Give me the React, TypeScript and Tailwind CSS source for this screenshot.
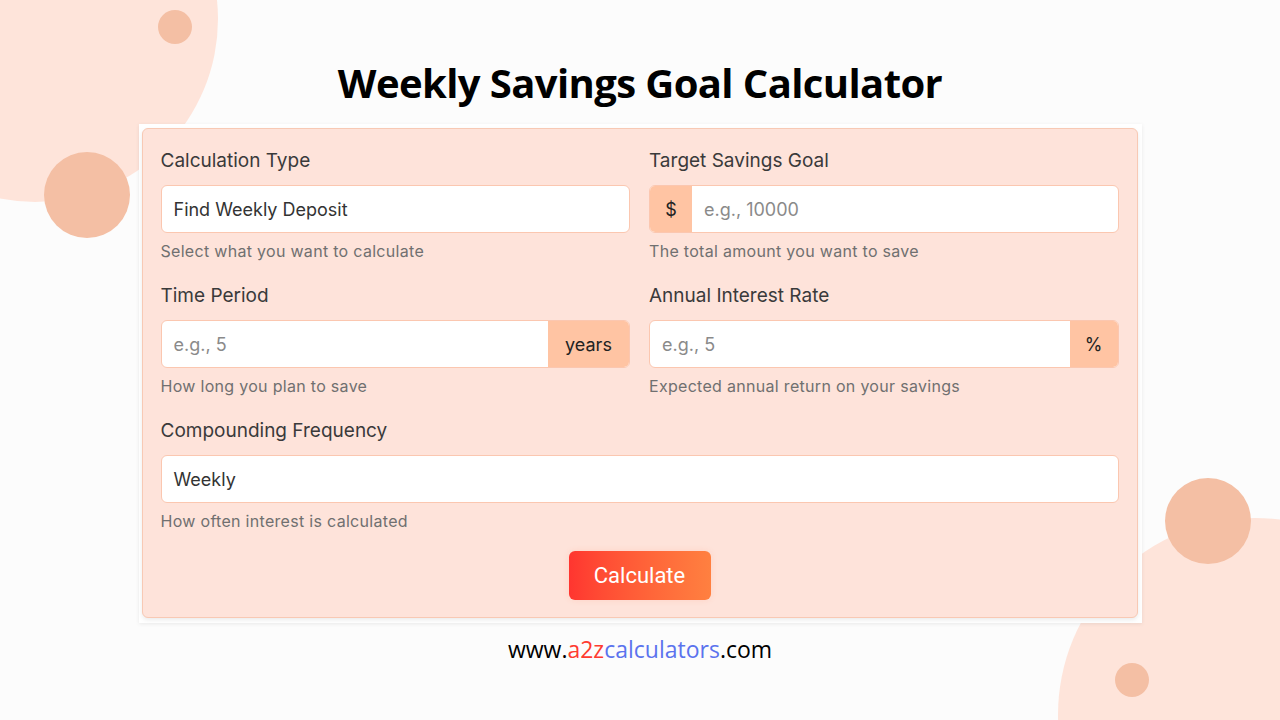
import React from "react";

const font = { fontFamily: "Inter, 'Noto Sans', sans-serif" } as const;

function Label({ children }: { children: React.ReactNode }) {
  return <div className="h-[24px] leading-[24px] text-[19px] text-[#3a3a3a]">{children}</div>;
}

function Helper({ children }: { children: React.ReactNode }) {
  return <div className="mt-[8px] h-[20px] leading-[20px] text-[16px] tracking-[0.3px] text-[#707070]">{children}</div>;
}

export default function App() {
  return (
    <div
      className="relative w-[1280px] h-[720px] overflow-hidden bg-[#fcfcfc] flex flex-col items-center"
      style={font}
    >
      {/* decorative circles */}
      <div className="absolute left-[-148px] top-[-164px] w-[366px] h-[366px] rounded-full bg-[#fee4da]" />
      <div className="absolute left-[158px] top-[10px] w-[34px] h-[34px] rounded-full bg-[#f4bfa4]" />
      <div className="absolute left-[44px] top-[152px] w-[86px] h-[86px] rounded-full bg-[#f4bfa4]" />
      <div className="absolute left-[1058px] top-[518px] w-[394px] h-[394px] rounded-full bg-[#fee4da]" />
      <div className="absolute left-[1165px] top-[478px] w-[86px] h-[86px] rounded-full bg-[#f4bfa4]" />
      <div className="absolute left-[1115px] top-[663px] w-[34px] h-[34px] rounded-full bg-[#f4bfa4]" />

      <h1
        className="relative mt-[59px] h-[48px] leading-[48px] text-[40px] font-bold text-black tracking-[-0.6px]"
        style={{ fontFamily: "'Open Sans', sans-serif" }}
      >
        Weekly Savings Goal Calculator
      </h1>

      <div className="relative mt-[17px] w-[1003px] bg-white pt-[4px] pl-[3px] pr-[4px] pb-[5px] shadow-[0_1px_4px_rgba(0,0,0,0.08)]">
        <div className="w-[996px] h-[490px] rounded-[6px] border border-[#f8c9b4] bg-[#fee3da] px-[18px] pt-[20px] shadow-[0_2px_4px_rgba(0,0,0,0.08)]">
          <div className="grid grid-cols-2 gap-x-[19px] gap-y-[23px]">
            <div>
              <Label>Calculation Type</Label>
              <div className="mt-[12px] h-[48px] rounded-[6px] border border-[#fbc7b0] bg-white px-[12px] flex items-center text-[18px] text-[#333]">
                Find Weekly Deposit
              </div>
              <Helper>Select what you want to calculate</Helper>
            </div>
            <div>
              <Label>Target Savings Goal</Label>
              <div className="mt-[12px] h-[48px] rounded-[6px] border border-[#fbc7b0] bg-white flex overflow-hidden">
                <div className="w-[42px] bg-[#ffc4a3] flex items-center justify-center text-[18px] text-[#222]">$</div>
                <div className="flex-1 flex items-center px-[12px] text-[18px] text-[#8a8a8a]">e.g., 10000</div>
              </div>
              <Helper>The total amount you want to save</Helper>
            </div>
            <div>
              <Label>Time Period</Label>
              <div className="mt-[12px] h-[48px] rounded-[6px] border border-[#fbc7b0] bg-white flex overflow-hidden">
                <div className="flex-1 flex items-center px-[12px] text-[18px] text-[#8a8a8a]">e.g., 5</div>
                <div className="w-[81px] bg-[#ffc4a3] flex items-center justify-center text-[18px] text-[#222]">years</div>
              </div>
              <Helper>How long you plan to save</Helper>
            </div>
            <div>
              <Label>Annual Interest Rate</Label>
              <div className="mt-[12px] h-[48px] rounded-[6px] border border-[#fbc7b0] bg-white flex overflow-hidden">
                <div className="flex-1 flex items-center px-[12px] text-[18px] text-[#8a8a8a]">e.g., 5</div>
                <div className="w-[48px] bg-[#ffc4a3] flex items-center justify-center text-[18px] text-[#222]">%</div>
              </div>
              <Helper>Expected annual return on your savings</Helper>
            </div>
            <div className="col-span-2">
              <Label>Compounding Frequency</Label>
              <div className="mt-[12px] h-[48px] rounded-[6px] border border-[#fbc7b0] bg-white px-[12px] flex items-center text-[18px] text-[#333]">
                Weekly
              </div>
              <Helper>How often interest is calculated</Helper>
            </div>
          </div>
          <div className="flex justify-center mt-[20px]">
            <button
              className="w-[142px] h-[49px] rounded-[6px] bg-gradient-to-r from-[#ff3530] to-[#ff8040] text-white text-[22px] shadow-[0_0_6px_rgba(255,120,80,0.15)]"
              style={{ fontFamily: "Roboto, sans-serif" }}
            >
              Calculate
            </button>
          </div>
        </div>
      </div>

      <div
        className="relative mt-[11px] h-[30px] leading-[30px] text-[23px] text-black"
        style={{ fontFamily: "'Open Sans', sans-serif" }}
      >
        www.<span className="text-[#ff3b30]">a2z</span>
        <span className="text-[#5b73ee]">calculators</span>.com
      </div>
    </div>
  );
}
